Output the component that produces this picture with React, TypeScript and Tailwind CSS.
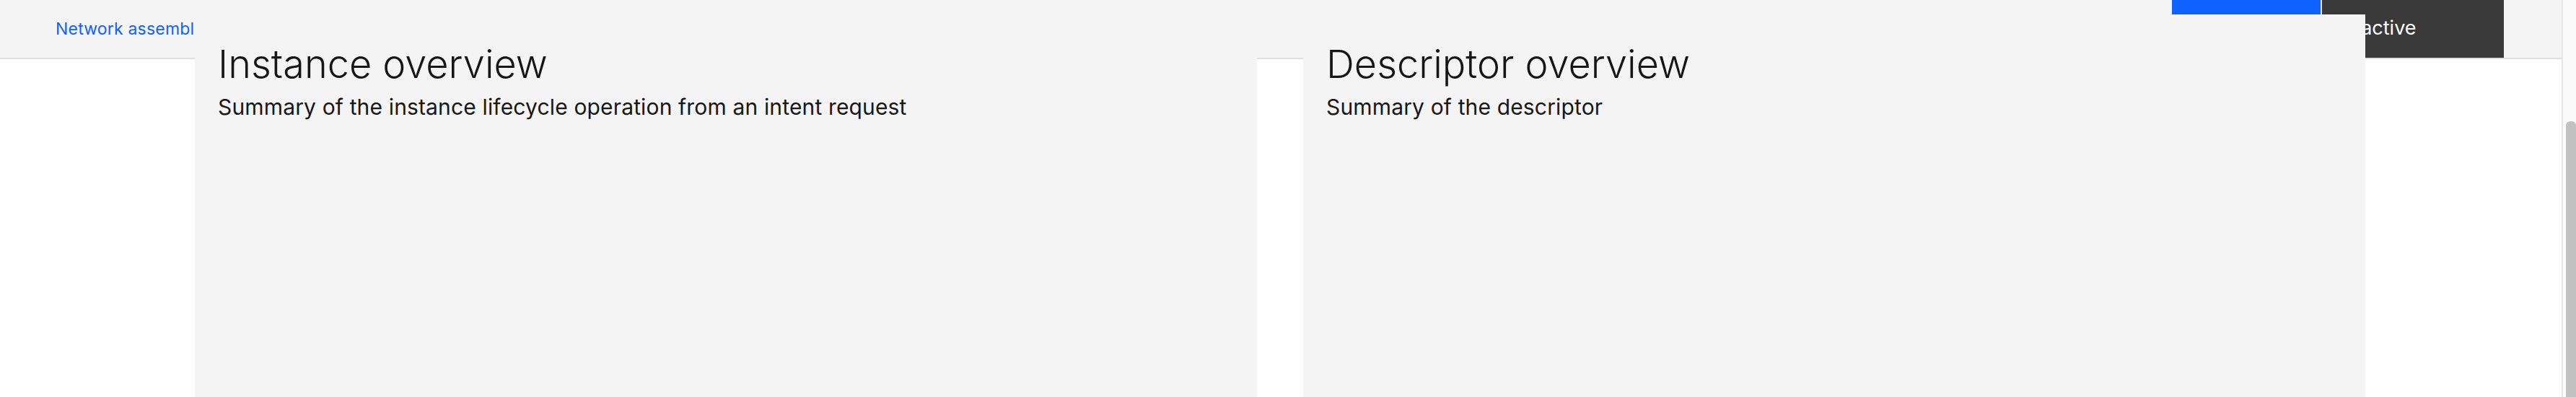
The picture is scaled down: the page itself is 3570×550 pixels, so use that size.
import React from 'react'

const FONT = "font-['Inter','Noto_Sans',sans-serif]"

function Header() {
  return (
    <div className="h-[82px] flex-shrink-0 flex items-start bg-[#f4f4f4] border-b-2 border-[#e0e0e0]">
      <a className="pl-[77px] h-[80px] flex items-center text-[23px] text-[#0f62fe] tracking-[0.2px]">
        Network assembly
      </a>
      <div className="ml-auto mr-[80px] flex gap-[2px] h-[80px] bg-[#e0e0e0]">
        <button className="w-[206px] h-full bg-[#0f62fe] text-white text-[27px] text-left pl-[26px]">
          Activate
        </button>
        <button className="w-[252px] h-full bg-[#393939] text-white text-[27px] text-left pl-[31px] pb-[2px]">
          Inactive
        </button>
      </div>
    </div>
  )
}

function Panel({ title, subtitle }: { title: string; subtitle: string }) {
  return (
    <section className="bg-[#f4f4f4] h-[600px] pl-[32px] pt-[34px]">
      <h1 className="text-[54px] leading-[70px] font-light text-[#161616]">{title}</h1>
      <p className="text-[30px] leading-[36px] tracking-[0.15px] text-[#161616] mt-[6px]">{subtitle}</p>
    </section>
  )
}

export default function App() {
  return (
    <div className={`${FONT} h-[550px] w-full overflow-hidden flex bg-white`}>
      <div className="flex-1 flex flex-col min-w-0">
        <Header />
        <div className="-mt-[62px] grid grid-cols-2 gap-[64px] pl-[270px] pr-[272px]">
          <Panel
            title="Instance overview"
            subtitle="Summary of the instance lifecycle operation from an intent request"
          />
          <Panel title="Descriptor overview" subtitle="Summary of the descriptor" />
        </div>
      </div>
      {/* scrollbar */}
      <div className="w-[20px] flex-shrink-0 flex flex-col bg-[#fafafa] border-l-2 border-[#e6e6e6]">
        <div className="h-[168px]" />
        <div className="flex-1 ml-[4px] bg-[#c1c1c1] rounded-t-[6px]" />
      </div>
    </div>
  )
}
